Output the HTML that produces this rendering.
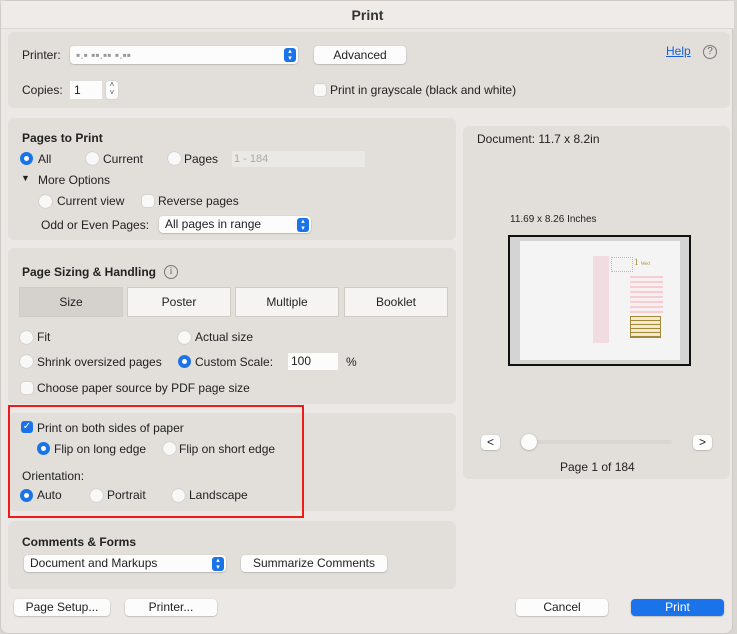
<!DOCTYPE html>
<html><head><meta charset="utf-8"><style>
*{box-sizing:border-box;margin:0;padding:0}
body{width:737px;height:634px;background:#d9d5d0;font-family:"Liberation Sans",sans-serif;font-size:12px;color:#222;position:relative;overflow:hidden}
.win{position:absolute;left:0;top:0;width:733px;height:634px;background:#ebe8e5;border-radius:8px;border:1px solid #cfcac5}
.title{position:absolute;left:0;top:0;width:733px;height:28px;background:#efebe8;border-bottom:1px solid #dcd8d4;text-align:center;line-height:28px;font-weight:bold;font-size:14px;color:#333}
.a{position:absolute;white-space:nowrap}
.pn{position:absolute;background:#e2dfdb;border-radius:6px}
.btn{position:absolute;background:#fcfcfc;border-radius:4px;box-shadow:0 0.5px 1.5px rgba(0,0,0,.3);text-align:center;line-height:18px;font-size:12px}
.rb{position:absolute;width:13px;height:13px;border-radius:50%;background:#f8f8f8;box-shadow:0 0 1px rgba(0,0,0,.35)}
.rb.on{background:#1a73e8;box-shadow:none}
.rb.on::after{content:"";position:absolute;left:4px;top:4px;width:5px;height:5px;border-radius:50%;background:#fff}
.cb{position:absolute;width:12px;height:12px;border-radius:3px;background:#f8f8f8;box-shadow:0 0 1px rgba(0,0,0,.35)}
.sel{position:absolute;background:#fcfcfc;border-radius:4px;box-shadow:0 0.5px 1.5px rgba(0,0,0,.3);line-height:18px;padding-left:6px}
.sel i{position:absolute;right:2px;top:2px;width:12px;height:14px;background:#1a73e8;border-radius:3px;color:#fff;font-style:normal;font-size:7px;line-height:7px;text-align:center}
.seg{position:absolute;top:286px;height:30px;background:#f5f4f3;border:1px solid #cfcbc7;text-align:center;line-height:28px;font-size:12px}
.h{font-weight:bold}
</style></head><body>
<div class="win">
<div class="title">Print</div>

<div class="pn" style="left:7px;top:31px;width:722px;height:76px"></div>
<div class="a" style="left:21px;top:47px">Printer:</div>
<div class="sel" style="left:69px;top:45px;width:228px;height:18px;color:#999">▪︎.▪︎ ▪︎▪︎.▪︎▪︎ ▪︎.▪︎▪︎<i>▴<br>▾</i></div>
<div class="btn" style="left:313px;top:45px;width:92px;height:18px">Advanced</div>
<div class="a" style="left:665px;top:43px;color:#1a5fd8;text-decoration:underline">Help</div>
<div class="a" style="left:702px;top:44px;width:14px;height:14px;border:1.3px solid #777;border-radius:50%;font-size:10px;text-align:center;line-height:12px;color:#666">?</div>
<div class="a" style="left:21px;top:82px">Copies:</div>
<div class="a" style="left:69px;top:80px;width:32px;height:18px;background:#fcfcfc;padding-left:4px;line-height:18px">1</div>
<div class="a" style="left:105px;top:80px;width:12px;height:18px;background:#fcfcfc;border-radius:3px;font-size:8px;line-height:8px;text-align:center;color:#555;box-shadow:0 0 1px rgba(0,0,0,.3)">˄<br>˅</div>
<div class="cb" style="left:313px;top:83px"></div>
<div class="a" style="left:329px;top:82px">Print in grayscale (black and white)</div>

<div class="pn" style="left:7px;top:117px;width:448px;height:122px"></div>
<div class="a h" style="left:21px;top:130px">Pages to Print</div>
<div class="rb on" style="left:19px;top:151px"></div><div class="a" style="left:37px;top:151px">All</div>
<div class="rb" style="left:85px;top:151px"></div><div class="a" style="left:102px;top:151px">Current</div>
<div class="rb" style="left:167px;top:151px"></div><div class="a" style="left:183px;top:151px">Pages</div>
<div class="a" style="left:231px;top:150px;width:133px;height:16px;background:#ebe9e6;color:#aaa;font-size:11px;padding-left:2px;line-height:16px">1 - 184</div>
<div class="a" style="left:20px;top:172px;font-size:9px">▼</div><div class="a" style="left:37px;top:172px">More Options</div>
<div class="rb" style="left:38px;top:194px"></div><div class="a" style="left:56px;top:193px">Current view</div>
<div class="cb" style="left:141px;top:194px"></div><div class="a" style="left:157px;top:193px">Reverse pages</div>
<div class="a" style="left:40px;top:217px">Odd or Even Pages:</div>
<div class="sel" style="left:158px;top:215px;width:152px;height:17px;line-height:17px">All pages in range<i>▴<br>▾</i></div>

<div class="pn" style="left:7px;top:247px;width:448px;height:156px"></div>
<div class="a h" style="left:21px;top:264px">Page Sizing &amp; Handling</div>
<div class="a" style="left:163px;top:264px;width:14px;height:14px;border:1.3px solid #777;border-radius:50%;font-size:10px;text-align:center;line-height:12px;color:#666;font-family:'Liberation Serif',serif">i</div>
<div class="seg" style="left:18px;width:104px;background:#d5d2ce">Size</div>
<div class="seg" style="left:126px;width:104px">Poster</div>
<div class="seg" style="left:234px;width:104px">Multiple</div>
<div class="seg" style="left:343px;width:104px">Booklet</div>
<div class="rb" style="left:19px;top:330px"></div><div class="a" style="left:36px;top:329px">Fit</div>
<div class="rb" style="left:177px;top:330px"></div><div class="a" style="left:194px;top:329px">Actual size</div>
<div class="rb" style="left:19px;top:354px"></div><div class="a" style="left:36px;top:354px">Shrink oversized pages</div>
<div class="rb on" style="left:177px;top:354px"></div><div class="a" style="left:194px;top:354px">Custom Scale:</div>
<div class="a" style="left:287px;top:352px;width:50px;height:17px;background:#fcfcfc;padding-left:3px;line-height:17px">100</div>
<div class="a" style="left:345px;top:354px">%</div>
<div class="cb" style="left:20px;top:381px"></div><div class="a" style="left:36px;top:380px">Choose paper source by PDF page size</div>

<div class="pn" style="left:7px;top:412px;width:448px;height:98px"></div>
<div class="a" style="left:20px;top:420px;width:12px;height:12px;border-radius:3px;background:#1a73e8;color:#fff;font-size:10px;line-height:12px;text-align:center">✓</div>
<div class="a" style="left:36px;top:420px">Print on both sides of paper</div>
<div class="rb on" style="left:36px;top:441px"></div><div class="a" style="left:53px;top:441px">Flip on long edge</div>
<div class="rb" style="left:162px;top:441px"></div><div class="a" style="left:178px;top:441px">Flip on short edge</div>
<div class="a" style="left:21px;top:468px">Orientation:</div>
<div class="rb on" style="left:19px;top:488px"></div><div class="a" style="left:36px;top:487px">Auto</div>
<div class="rb" style="left:89px;top:488px"></div><div class="a" style="left:106px;top:487px">Portrait</div>
<div class="rb" style="left:171px;top:488px"></div><div class="a" style="left:188px;top:487px">Landscape</div>
<div class="a" style="left:7px;top:404px;width:296px;height:113px;border:2px solid #f01a1a"></div>

<div class="pn" style="left:7px;top:520px;width:448px;height:68px"></div>
<div class="a h" style="left:21px;top:534px">Comments &amp; Forms</div>
<div class="sel" style="left:23px;top:554px;width:202px;height:17px;line-height:17px">Document and Markups<i>▴<br>▾</i></div>
<div class="btn" style="left:240px;top:554px;width:146px;height:17px;line-height:17px">Summarize Comments</div>

<div class="btn" style="left:13px;top:598px;width:96px;height:17px;line-height:17px">Page Setup...</div>
<div class="btn" style="left:124px;top:598px;width:92px;height:17px;line-height:17px">Printer...</div>
<div class="btn" style="left:515px;top:598px;width:92px;height:17px;line-height:17px">Cancel</div>
<div class="btn" style="left:630px;top:598px;width:93px;height:17px;line-height:17px;background:#1a73e8;color:#fff">Print</div>

<div class="pn" style="left:462px;top:125px;width:267px;height:353px"></div>
<div class="a" style="left:476px;top:131px">Document: 11.7 x 8.2in</div>
<div class="a" style="left:509px;top:213px;font-size:10px">11.69 x 8.26 Inches</div>
<div class="a" style="left:507px;top:234px;width:183px;height:131px;border:2px solid #111;background:#d4d4d4">
 <div style="position:absolute;left:10px;top:4px;width:160px;height:119px;background:#f4f4f4">
  <div style="position:absolute;left:73px;top:15px;width:16px;height:87px;background:#f1dde0"></div>
  <div style="position:absolute;left:91px;top:16px;width:22px;height:15px;border:1px dotted #bbb"></div>
  <div style="position:absolute;left:114px;top:16px;font-size:9px;color:#a08a3a;font-family:'Liberation Serif',serif">1 <span style="font-size:5px">Wed</span></div>
  <div style="position:absolute;left:110px;top:35px;width:33px;height:38px;background:repeating-linear-gradient(#f6cdd2 0 2px,#f8f0f0 2px 5px)"></div>
  <div style="position:absolute;left:110px;top:75px;width:31px;height:22px;border:1px solid #a08a3a;background:repeating-linear-gradient(#f4e9d0 0 3px,#a08a3a 3px 4px)"></div>
 </div>
</div>
<div class="btn" style="left:480px;top:434px;width:19px;height:15px;line-height:15px">&lt;</div>
<div class="a" style="left:526px;top:439px;width:145px;height:4px;background:#d9d6d2;border-radius:2px"></div>
<div class="a" style="left:520px;top:433px;width:16px;height:16px;border-radius:50%;background:#fbfbfb;box-shadow:0 0.5px 2px rgba(0,0,0,.3)"></div>
<div class="btn" style="left:692px;top:434px;width:19px;height:15px;line-height:15px">&gt;</div>
<div class="a" style="left:559px;top:459px">Page 1 of 184</div>
</div>
</body></html>
